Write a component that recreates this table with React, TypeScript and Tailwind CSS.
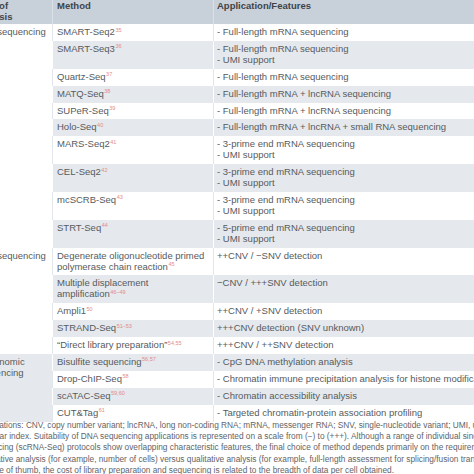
import React from "react";

type Row = { m: React.ReactNode; sup: string; app: string[] };

const Sup = ({ t }: { t: string }) => (
  <span className="relative -top-[3.5px] ml-[0.5px] text-[5.5px] leading-none text-[#e38b8b]">{t}</span>
);

const sections: { label: React.ReactNode; bg: string; rows: Row[] }[] = [
  {
    label: "RNA sequencing",
    bg: "bg-white",
    rows: [
      { m: "SMART-Seq2", sup: "35", app: ["- Full-length mRNA sequencing"] },
      { m: "SMART-Seq3", sup: "36", app: ["- Full-length mRNA sequencing", "- UMI support"] },
      { m: "Quartz-Seq", sup: "37", app: ["- Full-length mRNA sequencing"] },
      { m: "MATQ-Seq", sup: "38", app: ["- Full-length mRNA + lncRNA sequencing"] },
      { m: "SUPeR-Seq", sup: "39", app: ["- Full-length mRNA + lncRNA sequencing"] },
      { m: "Holo-Seq", sup: "40", app: ["- Full-length mRNA + lncRNA + small RNA sequencing"] },
      { m: "MARS-Seq2", sup: "41", app: ["- 3-prime end mRNA sequencing", "- UMI support"] },
      { m: "CEL-Seq2", sup: "42", app: ["- 3-prime end mRNA sequencing", "- UMI support"] },
      { m: "mcSCRB-Seq", sup: "43", app: ["- 3-prime end mRNA sequencing", "- UMI support"] },
      { m: "STRT-Seq", sup: "44", app: ["- 5-prime end mRNA sequencing", "- UMI support"] },
    ],
  },
  {
    label: "DNA sequencing",
    bg: "bg-white",
    rows: [
      {
        m: (
          <>
            Degenerate oligonucleotide primed
            <br />
            polymerase chain reaction
          </>
        ),
        sup: "45",
        app: ["++CNV / \u2212SNV detection"],
      },
      {
        m: (
          <>
            Multiple displacement
            <br />
            amplification
          </>
        ),
        sup: "46\u201349",
        app: ["\u2212CNV / +++SNV detection"],
      },
      { m: "Ampli1", sup: "50", app: ["++CNV / +SNV detection"] },
      { m: "STRAND-Seq", sup: "51\u201353", app: ["+++CNV detection (SNV unknown)"] },
      { m: "\u201cDirect library preparation\u201d", sup: "54,55", app: ["+++CNV / ++SNV detection"] },
    ],
  },
  {
    label: (
      <>
        Epigenomic
        <br />
        sequencing
      </>
    ),
    bg: "bg-[#e5e8ec]",
    rows: [
      { m: "Bisulfite sequencing", sup: "56,57", app: ["- CpG DNA methylation analysis"] },
      { m: "Drop-ChIP-Seq", sup: "58", app: ["- Chromatin immune precipitation analysis for histone modifications"] },
      { m: "scATAC-Seq", sup: "59,60", app: ["- Chromatin accessibility analysis"] },
      { m: "CUT&Tag", sup: "61", app: ["- Targeted chromatin-protein association profiling"] },
    ],
  },
];

const notes = [
  "Abbreviations: CNV, copy number variant; lncRNA, long non-coding RNA; mRNA, messenger RNA; SNV, single-nucleotide variant; UMI, unique",
  "molecular index. Suitability of DNA sequencing applications is represented on a scale from (\u2212) to (+++). Although a range of individual single-",
  "sequencing (scRNA-Seq) protocols show overlapping characteristic features, the final choice of method depends primarily on the requirements",
  "quantitative analysis (for example, number of cells) versus qualitative analysis (for example, full-length assessment for splicing/fusion transcripts",
  "As a rule of thumb, the cost of library preparation and sequencing is related to the breadth of data per cell obtained.",
];

export default function App() {
  let idx = 0;
  return (
    <div
      className="relative h-[474px] w-[474px] overflow-hidden bg-white text-[#565b60]"
      style={{ fontFamily: '"Liberation Sans", Arial, sans-serif' }}
    >
      <div className="ml-[-29px] w-[600px] text-[9.5px] leading-[10.9px]">
        <div className="flex h-[24px] bg-[#c8d0d9] font-bold text-[#3f4448]">
          <div className="w-[81px] shrink-0 px-[4px] pt-[1px]">
            Type of
            <br />
            analysis
          </div>
          <div className="w-[161px] shrink-0 border-l border-[#dbe0e6] px-[4px] pt-[1px]">Method</div>
          <div className="flex-1 border-l border-[#dbe0e6] px-[3px] pt-[1px]">Application/Features</div>
        </div>
        {sections.map((s, si) => (
          <div key={si} className="flex">
            <div className={`w-[81px] shrink-0 px-[4px] py-[3px] ${s.bg}`}>{s.label}</div>
            <div className="flex flex-1 flex-col">
              {s.rows.map((r, ri) => {
                const gray = idx++ % 2 === 1;
                const bd = gray ? "border-white" : "border-[#e2e6ea]";
                return (
                  <div key={ri} className={`flex ${gray ? "bg-[#e5e8ec]" : "bg-white"}`}>
                    <div className={`w-[161px] shrink-0 border-l px-[4px] py-[3px] ${bd}`}>
                      {r.m}
                      <Sup t={r.sup} />
                    </div>
                    <div className={`flex-1 whitespace-nowrap border-l px-[3px] py-[3px] ${bd}`}>
                      {r.app.map((a, ai) => (
                        <div key={ai}>{a}</div>
                      ))}
                    </div>
                  </div>
                );
              })}
            </div>
          </div>
        ))}
      </div>
      <div className="-mt-[2px] ml-[-29px] whitespace-nowrap text-[8.3px] leading-[11.4px] text-[#5f6468]">
        {notes.map((n, i) => (
          <div key={i}>{n}</div>
        ))}
      </div>
    </div>
  );
}
